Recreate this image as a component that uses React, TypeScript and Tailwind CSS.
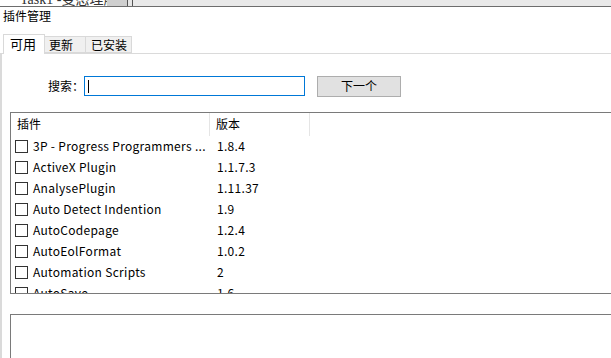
import React from "react";

const rows: [string, string][] = [
  ["3P - Progress Programmers ...", "1.8.4"],
  ["ActiveX Plugin", "1.1.7.3"],
  ["AnalysePlugin", "1.11.37"],
  ["Auto Detect Indention", "1.9"],
  ["AutoCodepage", "1.2.4"],
  ["AutoEolFormat", "1.0.2"],
  ["Automation Scripts", "2"],
  ["AutoSave", "1.6"],
];

export default function App() {
  return (
    <div
      className="w-[611px] h-[358px] overflow-hidden bg-white text-[12px] text-black relative"
      style={{ fontFamily: '"Noto Sans CJK SC", "Noto Sans", sans-serif' }}
    >
      {/* top clipped strip */}
      <div className="h-[7px] flex border-b border-[#6d6d6d] overflow-hidden">
        <div className="w-[107px] bg-white relative overflow-hidden">
          <div className="absolute left-[20px] top-[-11px] text-[14px] text-[#333] whitespace-nowrap" style={{ fontFamily: '"Liberation Serif", "Noto Sans CJK SC", serif' }}>
            Task1 -变态理解
          </div>
        </div>
        <div className="w-[20px] bg-[#cfcfcf]" />
        <div className="w-[1px] bg-[#555]" />
        <div className="w-[4px] bg-[#e6e6e6]" />
        <div className="w-[1px] bg-[#555]" />
        <div className="flex-1 bg-[#e9e9e9]" />
      </div>

      {/* title */}
      <div className="pl-[3px] pt-[1px] h-[25px] leading-[16px] text-[12px]">插件管理</div>

      {/* tabs */}
      <div className="flex items-end h-[21px] pl-[3px]">
        <div className="h-[20px] w-[42px] border border-b-0 border-[#d9d9d9] bg-white pl-[6px] leading-[18px] text-[13px] relative z-10 -mb-px">
          可用
        </div>
        <div className="h-[17px] w-[41px] border border-l-0 border-[#d9d9d9] bg-[#f0f0f0] pl-[4px] leading-[15px] text-[12px]">
          更新
        </div>
        <div className="h-[17px] w-[46px] border border-l-0 border-[#d9d9d9] bg-[#f0f0f0] pl-[5px] leading-[15px] text-[12px]">
          已安装
        </div>
      </div>

      {/* panel */}
      <div className="border-t border-l-2 border-[#dadada] h-[320px] relative">
        {/* search row */}
        <div className="flex items-center h-[20px] mt-[22px]">
          <div className="w-[82px] text-right text-[12px] pr-[0px]">搜索：</div>
          <div className="w-[221px] h-[20px] border border-[#0078d7] flex items-center pl-[3px]">
            <div className="w-px h-[13px] bg-black" />
          </div>
          <div className="ml-[12px] w-[84px] h-[21px] border border-[#adadad] bg-[#e1e1e1] flex items-center justify-center text-[12px]">
            下一个
          </div>
        </div>

        {/* list */}
        <div className="ml-[8px] mt-[16px] h-[182px] border-t border-l border-b border-[#7a7a7a] overflow-hidden">
          <div className="flex h-[23px] items-center">
            <div className="w-[199px] h-full pl-[6px] leading-[21px] border-r border-[#e5e5e5]">插件</div>
            <div className="w-[100px] h-full pl-[6px] leading-[21px] border-r border-[#e5e5e5]">版本</div>
          </div>
          {rows.map(([name, ver]) => (
            <div key={name} className="flex h-[21px] items-center">
              <div className="w-[199px] flex items-center pl-[4px]">
                <div className="w-[13px] h-[13px] border border-[#333] bg-white shrink-0" />
                <span className="ml-[5px] whitespace-nowrap tracking-[0.3px] leading-[18px] -mt-[2px]">{name}</span>
              </div>
              <div className="pl-[7px] tracking-[0.3px] leading-[18px] -mt-[2px]">{ver}</div>
            </div>
          ))}
        </div>

        {/* description box */}
        <div className="ml-[8px] mt-[20px] h-[60px] border-t border-l border-[#7a7a7a]" />
      </div>
    </div>
  );
}
